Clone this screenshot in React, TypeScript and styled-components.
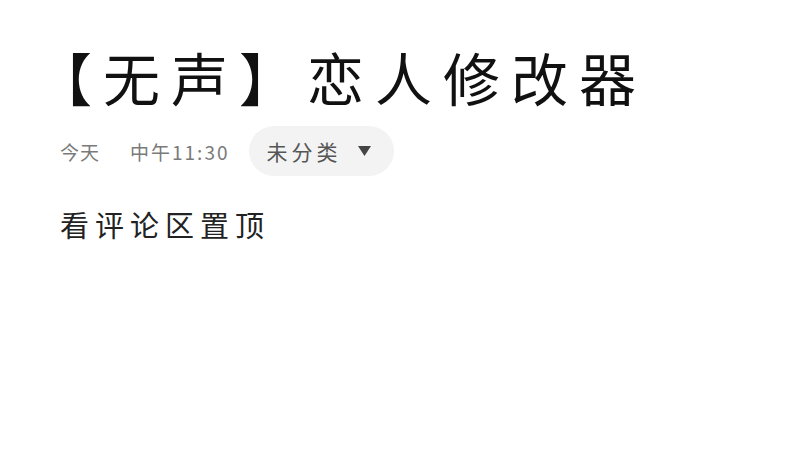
import React from "react";
import styled, { createGlobalStyle } from "styled-components";

const Global = createGlobalStyle`
  html, body { margin: 0; padding: 0; background: #ffffff; }
  body { width: 800px; height: 450px; overflow: hidden; }
  * { box-sizing: border-box; }
`;

const Page = styled.div`
  width: 800px;
  height: 450px;
  background: #ffffff;
  display: flex;
  flex-direction: column;
  padding: 38px 0 0 60px;
  font-family: "Noto Sans CJK SC", "Noto Sans", sans-serif;
`;

const Title = styled.h1`
  margin: 0 0 0 -25px;
  font-size: 57px;
  line-height: 76px;
  font-weight: 400;
  letter-spacing: 11px;
  color: #111;
  white-space: nowrap;
`;

const Meta = styled.div`
  display: flex;
  align-items: center;
  gap: 20px;
  margin-top: 12px;
  height: 50px;
`;

const DateGroup = styled.div`
  display: flex;
  align-items: center;
  gap: 30px;
  font-size: 19px;
  color: #7a7a7a;
  letter-spacing: 1px;
  white-space: nowrap;
`;

const Time = styled.span`
  letter-spacing: 2px;
`;

const Pill = styled.div`
  display: flex;
  align-items: center;
  gap: 16px;
  height: 50px;
  padding: 0 22px 0 17px;
  border-radius: 25px;
  background: #f3f3f3;
  font-size: 21px;
  color: #555;
  letter-spacing: 4px;
`;

const Caret = styled.svg`
  width: 15px;
  height: 12px;
  display: block;
`;

const Body = styled.p`
  margin: 28px 0 0 0;
  font-size: 29px;
  line-height: 40px;
  letter-spacing: 6px;
  color: #222;
`;

export default function App() {
  return (
    <>
      <Global />
      <Page>
        <Title>【无声】恋人修改器</Title>
        <Meta>
          <DateGroup>
            <span>今天</span>
            <Time>中午11:30</Time>
          </DateGroup>
          <Pill>
            <span>未分类</span>
            <Caret viewBox="0 0 15 12">
              <path d="M1 1 H14 L7.5 11 Z" fill="#444" />
            </Caret>
          </Pill>
        </Meta>
        <Body>看评论区置顶</Body>
      </Page>
    </>
  );
}
